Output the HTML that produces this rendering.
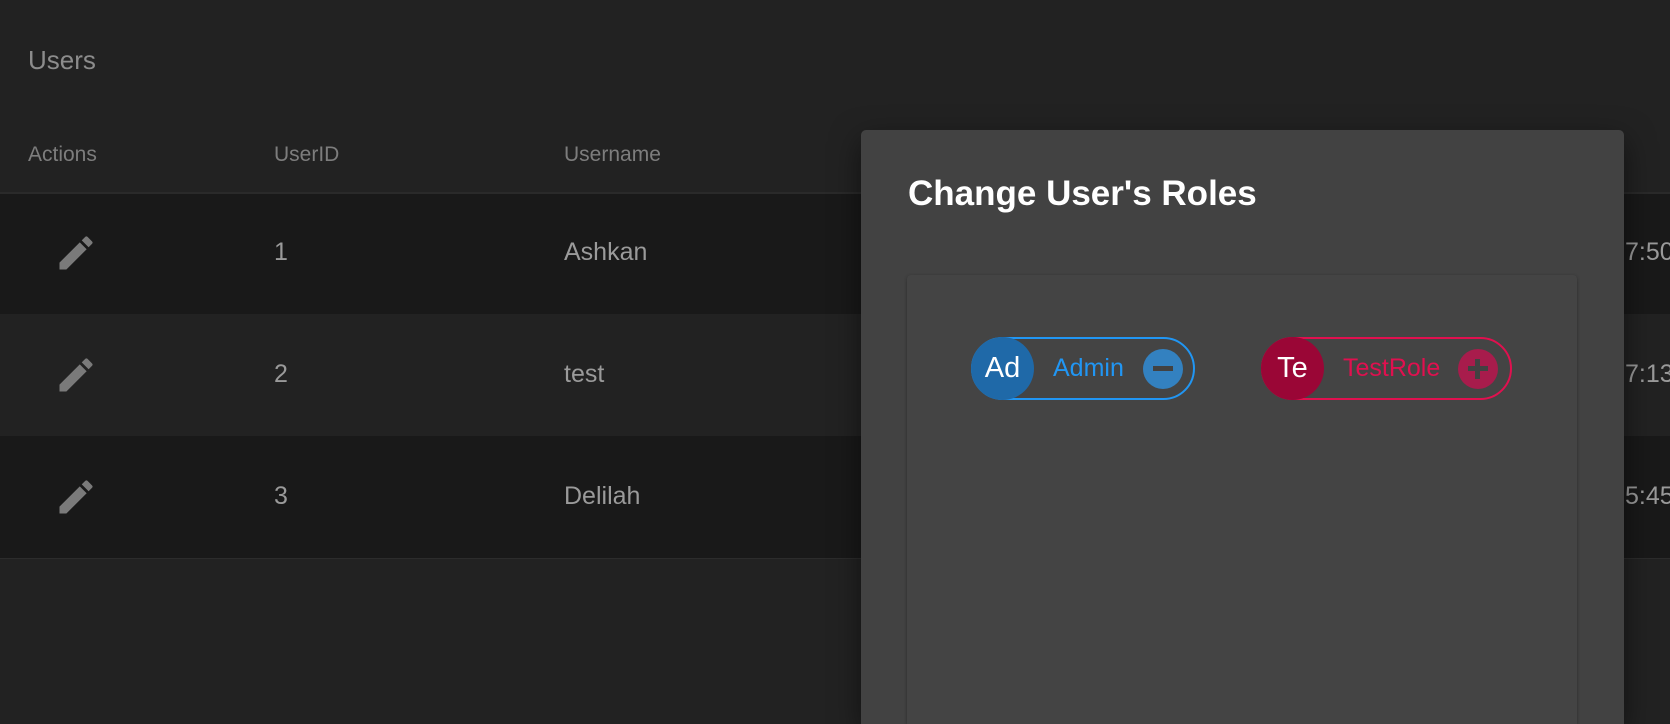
<!DOCTYPE html>
<html style="height:724px;overflow:hidden"><head><style>
body{margin:0;width:1670px;height:724px;background:#222;font-family:"Liberation Sans",sans-serif;overflow:hidden;position:relative}
.t{position:absolute;white-space:nowrap}
.row{position:absolute;left:0;width:1670px;height:122px;border-bottom:1px solid #2c2c2c}
.h{color:#7d7d7d;font-size:21px}
.c{color:#9a9a9a;font-size:25px}
.dlg{position:absolute;left:861px;top:130px;width:763px;height:594px;background:#424242;border-radius:5px 5px 0 0;box-shadow:0 10px 30px rgba(0,0,0,.5)}
.card{position:absolute;left:46px;top:145px;width:670px;height:449px;background:#444;border-radius:4px 4px 0 0;box-shadow:0 1px 3px rgba(0,0,0,.35)}
.chip{position:absolute;height:59px;border:2px solid;border-radius:32px;top:62px}
.av{position:absolute;left:-2px;top:-2px;width:63px;height:63px;border-radius:50%;color:#fff;font-size:29px;text-align:center;line-height:63px}
.ic{position:absolute;top:10px;width:40px;height:40px;border-radius:50%}
</style></head><body>
<div class="t" style="left:28px;top:45px;color:#8c8c8c;font-size:26px">Users</div>
<div class="row" style="top:192px;background:#191919;border-top:2px solid #2a2a2a"></div>
<div class="row" style="top:314px;background:#222"></div>
<div class="row" style="top:436px;background:#191919"></div>
<div class="t h" style="left:28px;top:143px">Actions</div>
<div class="t h" style="left:274px;top:143px">UserID</div>
<div class="t h" style="left:564px;top:143px">Username</div>
<svg class="t" style="left:54px;top:231px" width="44" height="44" viewBox="0 0 24 24"><path fill="#7a7a7a" d="M3 17.25V21h3.75L17.81 9.94l-3.75-3.75L3 17.25zM20.71 7.04a1 1 0 000-1.41l-2.34-2.34a1 1 0 00-1.410 0l-1.83 1.83 3.75 3.75 1.83-1.83z"/></svg>
<svg class="t" style="left:54px;top:353px" width="44" height="44" viewBox="0 0 24 24"><path fill="#7a7a7a" d="M3 17.25V21h3.75L17.81 9.940l-3.75-3.75L3 17.25zM20.71 7.04a1 1 0 000-1.41l-2.34-2.34a1 1 0 00-1.41 0l-1.83 1.83 3.75 3.75 1.83-1.83z"/></svg>
<svg class="t" style="left:54px;top:475px" width="44" height="44" viewBox="0 0 24 24"><path fill="#7a7a7a" d="M3 17.25V21h3.75L17.81 9.94l-3.75-3.75L3 17.25zM20.71 7.04a1 1 0 000-1.41l-2.34-2.34a1 1 0 00-1.41 0l-1.83 1.83 3.75 3.75 1.83-1.83z"/></svg>
<div class="t c" style="left:274px;top:238px">1</div>
<div class="t c" style="left:274px;top:360px">2</div>
<div class="t c" style="left:274px;top:482px">3</div>
<div class="t c" style="left:564px;top:238px">Ashkan</div>
<div class="t c" style="left:564px;top:360px">test</div>
<div class="t c" style="left:564px;top:482px">Delilah</div>
<div class="t c" style="left:1625px;top:238px">7:50</div>
<div class="t c" style="left:1625px;top:360px">7:13</div>
<div class="t c" style="left:1625px;top:482px">5:45</div>
<div class="dlg">
<div class="t" style="left:47px;top:44px;color:#fff;font-size:35px;font-weight:bold">Change User's Roles</div>
<div class="card">
<div class="chip" style="left:64px;width:220px;border-color:#2196f3">
<div class="av" style="background:#1f69a8">Ad</div>
<div class="t" style="left:80px;top:15px;color:#2196f3;font-size:25px">Admin</div>
<div class="ic" style="left:170px;background:#3381c0"><div style="position:absolute;left:10px;top:17px;width:20px;height:5px;background:#424242"></div></div>
</div>
<div class="chip" style="left:354px;width:247px;border-color:#e0104f">
<div class="av" style="background:#9a0636">Te</div>
<div class="t" style="left:80px;top:15px;color:#e0104f;font-size:25px">TestRole</div>
<div class="ic" style="left:195px;background:#a81c4c"><div style="position:absolute;left:10px;top:17px;width:20px;height:5px;background:#424242"></div><div style="position:absolute;left:17px;top:10px;width:5px;height:20px;background:#424242"></div></div>
</div>
</div>
</div>
</body></html>
